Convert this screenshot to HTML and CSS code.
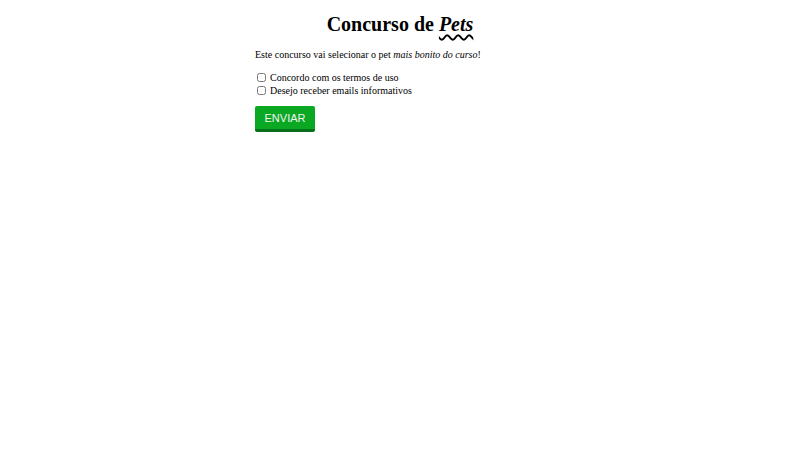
FILE: index.html
```html
<!DOCTYPE html>
<html lang="pt-BR">
<head>
<meta charset="utf-8">
<title>Concurso de Pets</title>
<link rel="stylesheet" href="styles.css">
</head>
<body>
<main class="page">
  <h1 class="title">Concurso de <em class="title-em">Pets</em></h1>
  <p class="intro">Este concurso vai selecionar o pet <em>mais bonito do curso</em>!</p>
  <form class="form">
    <label class="check"><input type="checkbox" class="check-box"> Concordo com os termos de uso</label>
    <label class="check"><input type="checkbox" class="check-box"> Desejo receber emails informativos</label>
    <button type="button" class="btn">ENVIAR</button>
  </form>
</main>
</body>
</html>
```
FILE: styles.css
```css
html, body {
  margin: 0;
  padding: 0;
  background: #fff;
}
body {
  font-family: "Liberation Serif", "Times New Roman", serif;
  font-size: 10px;
  color: #000;
}
.page {
  width: 290px;
  margin: 0 auto;
}
.title {
  font-size: 20px;
  font-weight: bold;
  text-align: center;
  margin: 13px 0 14px;
  line-height: 22px;
}
.title-em {
  font-style: italic;
  text-decoration: underline wavy;
  text-decoration-thickness: 1.5px;
  text-underline-offset: 3px;
}
.intro {
  margin: 0 0 10px;
  line-height: 12px;
}
.form {
  display: flex;
  flex-direction: column;
  align-items: flex-start;
}
.check {
  display: flex;
  align-items: center;
  gap: 4px;
  line-height: 13px;
  height: 13px;
}
.check-box {
  width: 9px;
  height: 9px;
  margin: 0 0 0 2px;
}
.btn {
  margin-top: 9px;
  background: #0ba823;
  color: #f4f4f4;
  border: none;
  border-bottom: 3px solid #07701a;
  border-radius: 2px;
  font-family: "Liberation Sans", Arial, sans-serif;
  font-size: 11px;
  padding: 0 9px;
  height: 26px;
  width: 60px;
}
```
